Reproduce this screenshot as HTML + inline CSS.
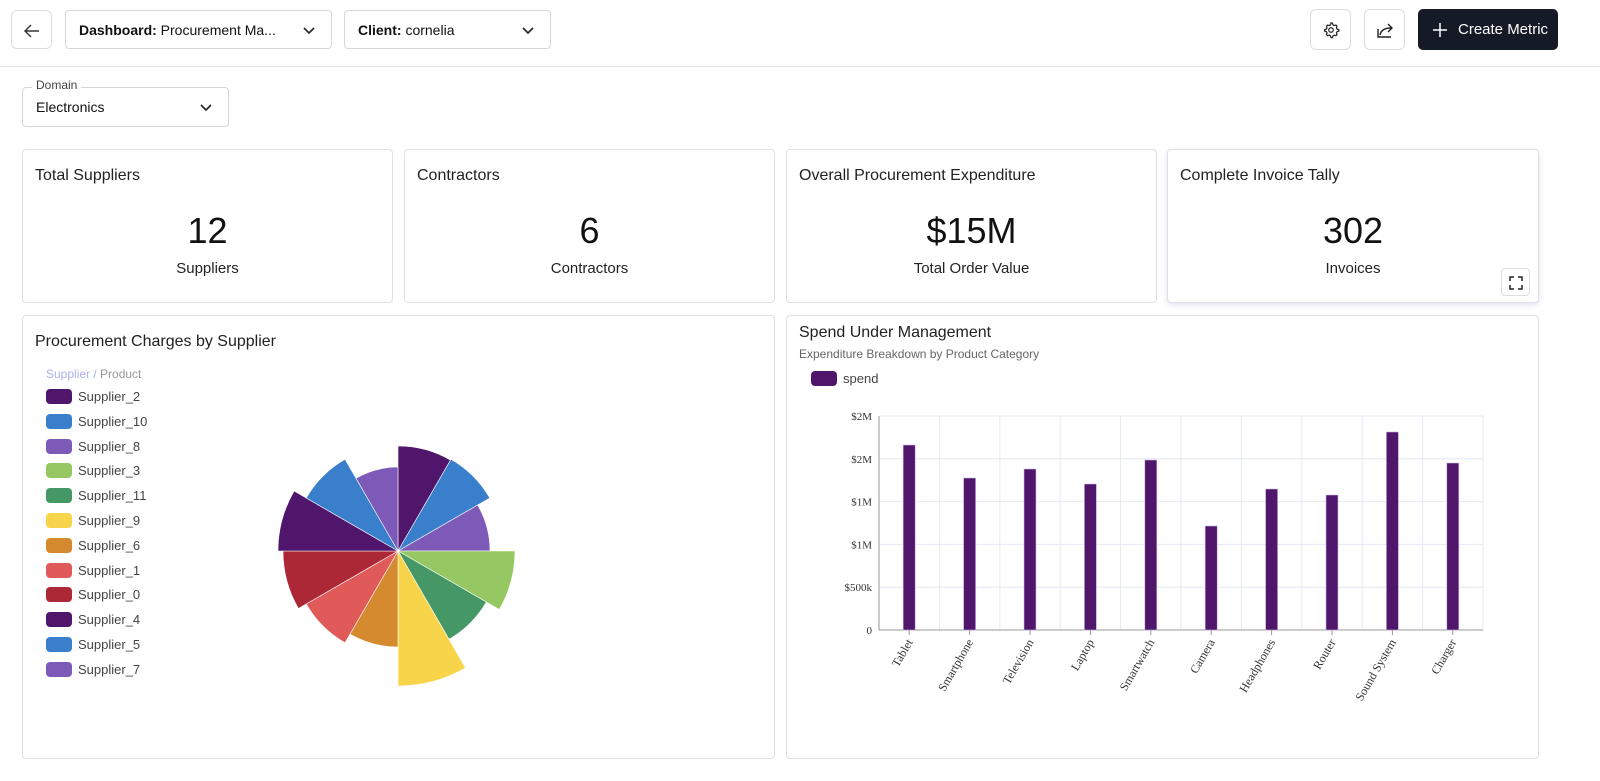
<!DOCTYPE html>
<html><head><meta charset="utf-8">
<style>
*{box-sizing:border-box;margin:0;padding:0}
body{width:1600px;height:781px;background:#fff;font-family:"Liberation Sans",Arial,sans-serif;color:#111;position:relative;overflow:hidden}
.a{position:absolute}
.btn{position:absolute;border:1px solid #dcdde2;border-radius:6px;background:#fff}
.sel{position:absolute;border:1px solid #d6d7dc;border-radius:4px;background:#fff;font-size:14px;display:flex;align-items:center;padding-left:13px}
.chev{position:absolute;right:16px;top:50%;margin-top:-6px}
.card{position:absolute;border:1px solid #e0e0e6;border-radius:4px;background:#fff}
.card .t{position:absolute;left:12px;top:17px;font-size:16px;color:#222}
.card .v{position:absolute;left:0;right:0;top:60px;text-align:center;font-size:36px;color:#111}
.card .s{position:absolute;left:0;right:0;top:110px;text-align:center;font-size:15px;color:#222}
.leg{position:absolute;left:24px;font-size:13px;color:#444;display:flex;align-items:center}
.leg i{display:inline-block;width:26px;height:15px;border-radius:4px;margin-right:6px}
</style></head><body>
<div class="btn" style="left:11px;top:10px;width:41px;height:39px">
<svg class="a" style="left:11px;top:11px" width="18" height="18" viewBox="0 0 18 18"><path d="M16 9H2M8 3L2 9l6 6" fill="none" stroke="#333" stroke-width="1.4"/></svg></div>
<div class="sel" style="left:65px;top:10px;width:267px;height:39px"><b>Dashboard:</b>&nbsp;Procurement Ma...
<svg class="chev" width="12" height="12" viewBox="0 0 12 12"><path d="M1 4l5 5 5-5" fill="none" stroke="#222" stroke-width="1.6"/></svg></div>
<div class="sel" style="left:344px;top:10px;width:207px;height:39px"><b>Client:</b>&nbsp;cornelia
<svg class="chev" width="12" height="12" viewBox="0 0 12 12"><path d="M1 4l5 5 5-5" fill="none" stroke="#222" stroke-width="1.6"/></svg></div>
<div class="btn" style="left:1310px;top:9px;width:41px;height:41px">
<svg class="a" style="left:11px;top:11px" width="18" height="18" viewBox="0 0 24 24" fill="none" stroke="#222" stroke-width="1.6"><circle cx="12" cy="12" r="3"/><path d="M12 2.5l2 .3.6 2.3 1.7 1 2.3-.7 1.4 1.5-.7 2.3 1 1.7 2.2.6v2l-2.2.6-1 1.7.7 2.3-1.4 1.5-2.3-.7-1.7 1-.6 2.3h-2l-.6-2.3-1.7-1-2.3.7-1.4-1.5.7-2.3-1-1.7-2.2-.6v-2l2.2-.6 1-1.7-.7-2.3 1.4-1.5 2.3.7 1.7-1 .6-2.3z"/></svg></div>
<div class="btn" style="left:1364px;top:9px;width:41px;height:41px">
<svg class="a" style="left:11px;top:11px" width="18" height="18" viewBox="0 0 18 18" fill="none" stroke="#222" stroke-width="1.4"><path d="M2 8v8h13"/><path d="M4 14c1-5 5-7 11-7M12 3l4 4-4 4"/></svg></div>
<div class="a" style="left:1418px;top:9px;width:140px;height:41px;background:#141a26;border-radius:5px;color:#fff;font-size:15px;display:flex;align-items:center">
<svg style="margin-left:14px;margin-right:10px" width="16" height="16" viewBox="0 0 16 16"><path d="M8 1v14M1 8h14" stroke="#fff" stroke-width="1.5"/></svg>Create Metric</div>
<div class="a" style="left:0;top:66px;width:1600px;height:1px;background:#e3e3e6"></div>

<div class="sel" style="left:22px;top:87px;width:207px;height:40px">Electronics
<svg class="chev" width="12" height="12" viewBox="0 0 12 12"><path d="M1 4l5 5 5-5" fill="none" stroke="#222" stroke-width="1.6"/></svg></div>
<div class="a" style="left:32px;top:78px;background:#fff;padding:0 4px;font-size:12px;color:#444">Domain</div>

<div class="card" style="left:22px;top:149px;width:371px;height:154px"><div class="t">Total Suppliers</div><div class="v">12</div><div class="s">Suppliers</div></div>
<div class="card" style="left:404px;top:149px;width:371px;height:154px"><div class="t">Contractors</div><div class="v">6</div><div class="s">Contractors</div></div>
<div class="card" style="left:786px;top:149px;width:371px;height:154px"><div class="t">Overall Procurement Expenditure</div><div class="v">$15M</div><div class="s">Total Order Value</div></div>
<div class="card" style="left:1167px;top:149px;width:372px;height:154px;box-shadow:0 2px 6px rgba(90,90,160,.18)"><div class="t">Complete Invoice Tally</div><div class="v">302</div><div class="s">Invoices</div>
<div class="a" style="left:333px;top:118px;width:29px;height:28px;border:1px solid #ddd;border-radius:4px">
<svg class="a" style="left:7px;top:7px" width="14" height="14" viewBox="0 0 14 14" fill="none" stroke="#222" stroke-width="1.5"><path d="M1 5V1h4M9 1h4v4M13 9v4H9M5 13H1V9"/></svg></div></div>

<div class="card" style="left:22px;top:315px;width:753px;height:444px">
<div class="a" style="left:12px;top:17px;font-size:16px;color:#222">Procurement Charges by Supplier</div>
<div class="a" style="left:23px;top:51px;font-size:12px;color:#999"><span style="color:#aab0f0">Supplier /</span> Product</div>
</div>
<div class="card" style="left:786px;top:315px;width:753px;height:444px">
<div class="a" style="left:12px;top:8px;font-size:16px;color:#222">Spend Under Management</div>
<div class="a" style="left:12px;top:31px;font-size:12px;color:#666">Expenditure Breakdown by Product Category</div>
<div class="a" style="left:24px;top:55px;font-size:13px;color:#444;display:flex;align-items:center"><i style="display:inline-block;width:26px;height:15px;border-radius:4px;background:#4f166b;margin-right:6px"></i>spend</div>
</div>

<div id="legs"></div>
<svg class="a" style="left:0;top:0" width="1600" height="781" id="sv">
<g id="pie"></g>
<g id="bar" font-family="Liberation Serif,serif" font-size="11" fill="#333"></g>
</svg>
<script>
var cols=["#4f166b","#3a7fcc","#7e5ab8","#95c862","#459766","#f8d44a","#d68a2f","#e05a5a","#ad2836","#4f166b","#3a7fcc","#7e5ab8"];
var names=["Supplier_2","Supplier_10","Supplier_8","Supplier_3","Supplier_11","Supplier_9","Supplier_6","Supplier_1","Supplier_0","Supplier_4","Supplier_5","Supplier_7"];
var L="";for(var i=0;i<12;i++){L+='<div class="leg" style="left:46px;top:'+(389+i*24.8)+'px"><i style="background:'+cols[i]+'"></i>'+names[i]+'</div>';}
document.getElementById("legs").innerHTML=L;
var r=[105,106,92,117,102,135,96,106,115,120,106,84],cx=398,cy=551,P="";
for(var i=0;i<12;i++){var a0=(i*30-90)*Math.PI/180,a1=((i+1)*30-90)*Math.PI/180;
P+='<path d="M'+cx+' '+cy+'L'+(cx+r[i]*Math.cos(a0)).toFixed(1)+' '+(cy+r[i]*Math.sin(a0)).toFixed(1)+'A'+r[i]+' '+r[i]+' 0 0 1 '+(cx+r[i]*Math.cos(a1)).toFixed(1)+' '+(cy+r[i]*Math.sin(a1)).toFixed(1)+'Z" fill="'+cols[i]+'" stroke="#fff" stroke-width="0.6"/>';}
document.getElementById("pie").innerHTML=P;
var B="",x0=879,x1=1483,yb=630,yt=416,labs=["$2M","$2M","$1M","$1M","$500k","0"];
for(var k=0;k<6;k++){var y=yt+k*42.8;B+='<line x1="'+x0+'" y1="'+y+'" x2="'+x1+'" y2="'+y+'" stroke="#e6e8f4"/><text x="'+(x0-7)+'" y="'+(y+4)+'" text-anchor="end">'+labs[k]+'</text>';}
for(var k=1;k<=10;k++){var x=x0+k*60.4;B+='<line x1="'+x+'" y1="'+yt+'" x2="'+x+'" y2="'+yb+'" stroke="#e6e8f4"/>';}
B+='<line x1="'+x0+'" y1="'+yt+'" x2="'+x0+'" y2="'+yb+'" stroke="#999"/><line x1="'+x0+'" y1="'+yb+'" x2="'+x1+'" y2="'+yb+'" stroke="#999"/>';
var cats=["Tablet","Smartphone","Television","Laptop","Smartwatch","Camera","Headphones","Router","Sound System","Charger"],tops=[445,478,469,484,460,526,489,495,432,463];
for(var k=0;k<10;k++){var c=x0+30.2+k*60.4;B+='<rect x="'+(c-6)+'" y="'+tops[k]+'" width="12" height="'+(yb-tops[k])+'" fill="#4f166b" stroke="#c9b6dc" stroke-width="0.6"/><line x1="'+c+'" y1="'+yb+'" x2="'+c+'" y2="'+(yb+5)+'" stroke="#999"/><text font-size="12" transform="translate('+(c+4)+','+(yb+12)+') rotate(-60)" text-anchor="end">'+cats[k]+'</text>';}
document.getElementById("bar").innerHTML=B;
</script>
</body></html>
